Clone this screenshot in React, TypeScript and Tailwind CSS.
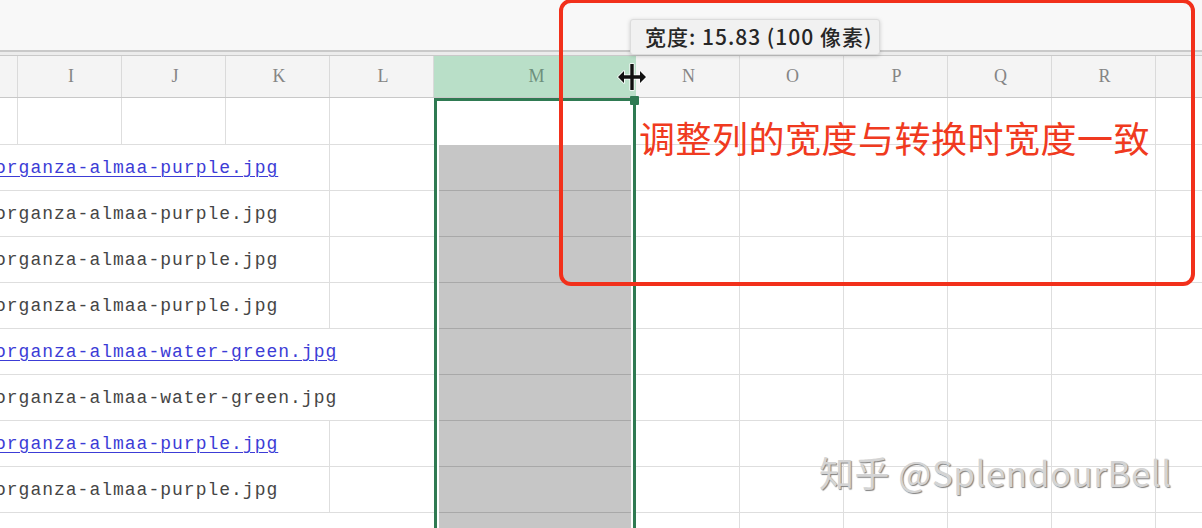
import React from "react";

type Row = { text?: string; link?: boolean; first?: boolean };

const rows: Row[] = [
  { first: true },
  { text: "organza-almaa-purple.jpg", link: true },
  { text: "organza-almaa-purple.jpg" },
  { text: "organza-almaa-purple.jpg" },
  { text: "organza-almaa-purple.jpg" },
  { text: "organza-almaa-water-green.jpg", link: true },
  { text: "organza-almaa-water-green.jpg" },
  { text: "organza-almaa-purple.jpg", link: true },
  { text: "organza-almaa-purple.jpg" },
  { text: "organza-almaa-water-green.jpg" },
];

const rightCols = ["N", "O", "P", "Q", "R"];

function Cursor() {
  return (
    <svg width="34" height="32" viewBox="0 0 34 32" className="absolute left-[615px] top-[61px]">
      <path
        d="M3 16 L9 10 L9 14.3 L15.3 14.3 L15.3 3 L18.7 3 L18.7 14.3 L25 14.3 L25 10 L31 16 L25 22 L25 17.7 L18.7 17.7 L18.7 29 L15.3 29 L15.3 17.7 L9 17.7 L9 22 Z"
        fill="#111"
        stroke="#fff"
        strokeWidth="1.6"
        strokeLinejoin="round"
        paintOrder="stroke"
      />
    </svg>
  );
}

export default function App() {
  return (
    <div className="relative w-[1202px] h-[528px] overflow-hidden bg-white">
      {/* top toolbar area */}
      <div className="h-[50px] bg-[#f8f8f8]" />
      <div className="h-[6px] border-t-2 border-b border-[#c9c9c9] bg-[#ececec]" />

      {/* column header */}
      <div className="flex h-[42px] border-b border-[#c8c8c8] bg-[#f4f4f4] font-['Liberation_Serif',serif] text-[18px] text-[#858585]">
        <div className="w-[18px] h-full border-r border-[#dadada]" />
        {["I", "J", "K", "L"].map((c) => (
          <div key={c} className="w-[104px] h-full border-r border-[#dadada] flex items-center justify-center pl-[3px]">
            {c}
          </div>
        ))}
        <div className="w-[202px] h-full bg-[#b9dfc8] flex items-center justify-center text-[#6e8f7c] pl-[3px]">M</div>
        {rightCols.map((c) => (
          <div key={c} className="w-[104px] h-full border-r border-[#dadada] flex items-center justify-center pl-[2px]">
            {c}
          </div>
        ))}
        <div className="flex-1 h-full" />
      </div>

      {/* body rows */}
      {rows.map((r, i) => {
        const hasText = !!r.text;
        const long = hasText && r.text!.length > 26;
        const cell = "h-full border-b border-[#dedede]";
        return (
          <div key={i} className={`flex ${r.first ? "h-[47px]" : "h-[46px]"}`}>
            <div className={`w-[18px] ${cell} ${hasText ? "" : "border-r"} relative`}>
              {hasText && (
                <span
                  className={`absolute left-[-5px] top-1/2 -translate-y-1/2 whitespace-nowrap font-['Liberation_Mono',monospace] text-[18px] tracking-[1px] leading-none ${
                    r.link ? "text-[#3c3cd6] underline decoration-1 underline-offset-[3px]" : "text-[#454545]"
                  }`}
                >
                  {r.text}
                </span>
              )}
            </div>
            <div className={`w-[104px] ${cell} ${hasText ? "" : "border-r"}`} />
            <div className={`w-[104px] ${cell} ${hasText ? "" : "border-r"}`} />
            <div className={`w-[104px] ${cell} ${long ? "" : "border-r"}`} />
            <div className={`w-[104px] ${cell}`} />
            <div
              className={`w-[202px] h-full border-x-[3px] border-[#2f7a52] px-[2px] ${
                r.first ? "border-t-[3px] bg-white" : "bg-white"
              }`}
            >
              <div className={`h-full ${r.first ? "bg-white" : "bg-[#c6c6c6] border-b border-[#a8a8a8]"}`} />
            </div>
            {rightCols.map((c) => (
              <div key={c} className={`w-[104px] ${cell} border-r`} />
            ))}
            <div className={`flex-1 ${cell}`} />
          </div>
        );
      })}

      {/* selection marker */}
      <div className="absolute left-[630px] top-[96px] w-[9px] h-[9px] bg-[#2f7a52] rounded-[1px]" />

      {/* tooltip */}
      <div className="absolute left-[630px] top-[19px] w-[250px] h-[36px] rounded-[3px] bg-[#f1f1f1] border border-[#dcdcdc] shadow-[0_1px_4px_rgba(0,0,0,0.18)] flex items-center pl-[14px] font-['Noto_Sans_CJK_SC','Noto_Sans',sans-serif] text-[21px] tracking-[1px] font-medium text-[#262626] whitespace-nowrap">
        宽度: 15.83 (100 像素)
      </div>

      <Cursor />

      {/* red annotation box */}
      <div className="absolute left-[559px] top-[-1px] w-[636px] h-[287px] rounded-[12px] border-[4px] border-[#f2301b]" />
      <div className="absolute left-[639px] top-[114px] font-['Noto_Sans_CJK_SC',sans-serif] text-[36px] leading-[46px] tracking-[0.5px] text-[#f03a20] whitespace-nowrap">
        调整列的宽度与转换时宽度一致
      </div>

      {/* watermark */}
      <div className="absolute left-[819px] top-[449px] font-['Noto_Sans_CJK_SC','Noto_Sans',sans-serif] text-[35px] leading-[46px] tracking-[0.5px] text-[#d4d4d4] whitespace-nowrap [text-shadow:1px_1px_1px_#808080]">
        知乎 @SplendourBell
      </div>
    </div>
  );
}
